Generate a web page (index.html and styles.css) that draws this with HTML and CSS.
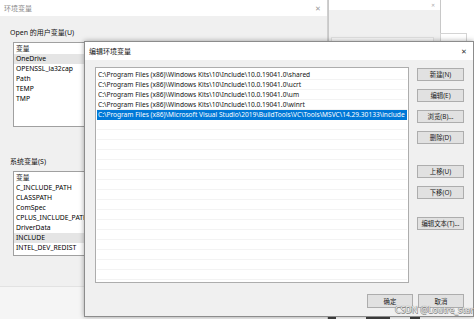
FILE: index.html
```html
<!DOCTYPE html>
<html lang="zh-CN">
<head>
  <meta charset="UTF-8" />
  <meta name="viewport" content="width=device-width, initial-scale=1.0"/>
  <title>编辑环境变量</title>
  <link rel="stylesheet" href="styles.css">
</head>
<body>
  <div class="desktop">

    <!-- window behind: 环境变量 -->
    <div class="win env">
      <div class="titlebar dim">
        <span class="title">环境变量</span>
        <span class="close">✕</span>
      </div>
      <div class="env-body">
        <div class="group-label">Open 的用户变量(U)</div>
        <div class="listview user">
          <div class="lv-row head">变量</div>
          <div class="lv-row hl">OneDrive</div>
          <div class="lv-row">OPENSSL_ia32cap</div>
          <div class="lv-row">Path</div>
          <div class="lv-row">TEMP</div>
          <div class="lv-row">TMP</div>
        </div>

        <div class="group-label sys">系统变量(S)</div>
        <div class="listview system">
          <div class="lv-row head">变量</div>
          <div class="lv-row">C_INCLUDE_PATH</div>
          <div class="lv-row">CLASSPATH</div>
          <div class="lv-row">ComSpec</div>
          <div class="lv-row">CPLUS_INCLUDE_PATH</div>
          <div class="lv-row">DriverData</div>
          <div class="lv-row hl">INCLUDE</div>
          <div class="lv-row">INTEL_DEV_REDIST</div>
          <div class="lv-row">INTEL_OCL_SDK</div>
        </div>
        <div class="env-foot"></div>
      </div>
    </div>

    <!-- another window behind -->
    <div class="win back">
      <div class="titlebar small">
        <span class="close">✕</span>
      </div>
      <div class="back-body">
        <div class="back-inner"></div>
      </div>
    </div>
    <div class="win stub"></div>

    <!-- active dialog -->
    <div class="win dialog">
      <div class="titlebar">
        <span class="title">编辑环境变量</span>
        <span class="close">✕</span>
      </div>
      <div class="dlg-body">
        <div class="dlg-main">
          <div class="path-list">
            <div class="p-row">C:\Program Files (x86)\Windows Kits\10\Include\10.0.19041.0\shared</div>
            <div class="p-row">C:\Program Files (x86)\Windows Kits\10\Include\10.0.19041.0\ucrt</div>
            <div class="p-row">C:\Program Files (x86)\Windows Kits\10\Include\10.0.19041.0\um</div>
            <div class="p-row">C:\Program Files (x86)\Windows Kits\10\Include\10.0.19041.0\winrt</div>
            <div class="p-row selected">C:\Program Files (x86)\Microsoft Visual Studio\2019\BuildTools\VC\Tools\MSVC\14.29.30133\include</div>
            <div class="p-row"></div>
            <div class="p-row"></div>
            <div class="p-row"></div>
            <div class="p-row"></div>
            <div class="p-row"></div>
            <div class="p-row"></div>
            <div class="p-row"></div>
            <div class="p-row"></div>
            <div class="p-row"></div>
            <div class="p-row"></div>
            <div class="p-row"></div>
            <div class="p-row"></div>
            <div class="p-row"></div>
            <div class="p-row"></div>
            <div class="p-row"></div>
            <div class="p-row"></div>
          </div>
          <div class="side-btns">
            <div class="btn-group">
              <button class="btn">新建(N)</button>
              <button class="btn">编辑(E)</button>
              <button class="btn">浏览(B)...</button>
              <button class="btn">删除(D)</button>
            </div>
            <div class="btn-group move">
              <button class="btn">上移(U)</button>
              <button class="btn">下移(O)</button>
            </div>
            <div class="btn-group text">
              <button class="btn">编辑文本(T)...</button>
            </div>
          </div>
        </div>
        <div class="dlg-foot">
          <button class="btn">确定</button>
          <button class="btn">取消</button>
        </div>
      </div>
    </div>

    <div class="taskbar-bits">
      <span class="bit b1"></span>
      <span class="bit b2"></span>
      <span class="bit b3"></span>
    </div>

    <div class="watermark">CSDN @Loutre_star</div>
  </div>
</body>
</html>
```

FILE: styles.css
```css
body {
  margin: 0;
  background: #fff;
  font-family: "Noto Sans", "Noto Sans CJK SC", sans-serif;
  color: #000;
}

.desktop {
  position: relative;
  width: 474px;
  height: 319px;
  overflow: hidden;
  background: #fff;
}

.win {
  position: absolute;
  box-sizing: border-box;
  background: #f0f0f0;
}

.titlebar {
  display: flex;
  align-items: center;
  justify-content: space-between;
  background: #fff;
  height: 18px;
  padding: 0 6px 0 4px;
  font-size: 7px;
}

.titlebar .close {
  font-size: 7px;
  color: #333;
}

.titlebar.dim {
  height: 16px;
  color: #8a8a8a;
}

.titlebar.dim .close {
  color: #999;
}

/* 环境变量 window */
.env {
  left: 0;
  top: 0;
  width: 328px;
  height: 319px;
  border-right: 1px solid #cfcfcf;
  display: flex;
  flex-direction: column;
}

.env-body {
  flex: 1;
  display: flex;
  flex-direction: column;
  padding-left: 10px;
}

.group-label {
  font-size: 7px;
  line-height: 10px;
  margin-top: 12px;
  color: #111;
}

.group-label.sys {
  margin-top: 30px;
}

.listview {
  margin: 4px 0 0 3px;
  background: #fff;
  border: 1px solid #a0a0a0;
  height: 85px;
  box-sizing: border-box;
  overflow: hidden;
  padding-top: 1px;
}

.lv-row {
  height: 10px;
  line-height: 10px;
  font-size: 6.8px;
  padding-left: 2px;
  white-space: nowrap;
}

.lv-row.head {
  color: #222;
}

.lv-row.hl {
  background: #e5e5e5;
}

.env-foot {
  margin: 30px 0 0 -10px;
  border-top: 1px solid #e2e2e2;
  flex: 1;
  background: #f5f5f5;
}

/* window further back */
.back {
  left: 328px;
  top: 0;
  width: 113px;
  height: 42px;
  border-left: 1px solid #c8c8c8;
  border-right: 1px solid #c8c8c8;
}

.titlebar.small {
  height: 10px;
  justify-content: flex-end;
  padding-right: 5px;
}

.titlebar.small .close {
  font-size: 5px;
  color: #aaa;
}

.back-body {
  padding: 27px 6px 0 2px;
}

.back-inner {
  height: 6px;
  background: #f9f9f9;
  border: 1px solid #e0e0e0;
  border-bottom: none;
}

.stub {
  left: 440px;
  top: 33px;
  width: 27px;
  height: 9px;
  background: #fff;
  border: 1px solid #d4d4d4;
  border-bottom: none;
}

/* active dialog */
.dialog {
  left: 84px;
  top: 41px;
  width: 390px;
  height: 276px;
  border: 1px solid #8c8c8c;
  box-shadow: 0 0 5px rgba(0, 0, 0, 0.35);
  display: flex;
  flex-direction: column;
}

.dialog .titlebar {
  padding-left: 4px;
  padding-right: 6px;
  color: #111;
}

.dlg-body {
  flex: 1;
  padding: 7px 9px 7px 10px;
  display: flex;
  flex-direction: column;
}

.dlg-main {
  display: flex;
  gap: 8px;
}

.path-list {
  width: 314px;
  height: 216px;
  box-sizing: border-box;
  background: #fff;
  border: 1px solid #adadad;
  padding: 2px 1px 0;
  overflow: hidden;
}

.p-row {
  height: 10px;
  line-height: 10px;
  font-size: 6.6px;
  padding-left: 1px;
  white-space: nowrap;
  box-sizing: border-box;
  border-bottom: 1px solid #f3f3f3;
  color: #111;
}

.p-row.selected {
  background: #0078d7;
  color: #fff;
  border-bottom-color: #0078d7;
}

.side-btns {
  width: 47px;
  padding-top: 1px;
  display: flex;
  flex-direction: column;
}

.btn-group {
  display: flex;
  flex-direction: column;
  gap: 8px;
}

.btn-group.move {
  margin-top: 21px;
}

.btn-group.text {
  margin-top: 18px;
}

.btn {
  height: 13px;
  width: 47px;
  padding: 0;
  background: #e1e1e1;
  border: 1px solid #adadad;
  font-family: "Noto Sans", "Noto Sans CJK SC", sans-serif;
  font-size: 6.4px;
  line-height: 11px;
  color: #222;
}

.dlg-foot {
  margin-top: 11px;
  display: flex;
  justify-content: flex-end;
  gap: 5px;
}

.dlg-foot .btn {
  height: 14px;
  width: 46px;
}

.taskbar-bits {
  position: absolute;
  left: 84px;
  top: 317px;
  width: 390px;
  height: 2px;
}

.bit {
  position: absolute;
  top: 0;
  height: 2px;
  background: #3a3a3a;
}

.b1 { left: 244px; width: 8px; }
.b2 { left: 282px; width: 24px; }
.b3 { left: 326px; width: 10px; }

.watermark {
  position: absolute;
  left: 395px;
  top: 305px;
  font-size: 8.6px;
  line-height: 11px;
  color: #f2f2f2;
  text-shadow: 0 0 1px #666, 0.5px 0.5px 0 #888, -0.5px -0.5px 0 #999;
  white-space: nowrap;
}
```
